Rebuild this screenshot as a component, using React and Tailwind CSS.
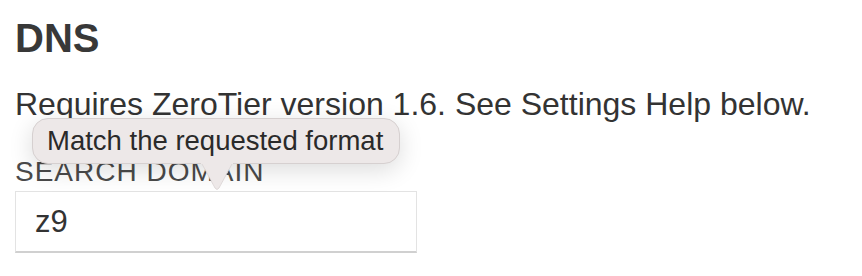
export default function App() {
  return (
    <div className="relative w-[862px] h-[276px] bg-white text-[#333] font-['Liberation_Sans',Arial,sans-serif]">
      <div className="flex flex-col pl-[15px] pt-[18px]">
        {/* Heading */}
        <h2 className="text-[40px] leading-[40px] font-bold text-[#383838]">DNS</h2>
        <p className="mt-[30px] text-[32px] leading-[32px]">
          Requires ZeroTier version 1.6. See Settings Help below.
        </p>
        <label className="mt-[38px] text-[28px] leading-[28px] text-[#4a4a4a] uppercase tracking-[1px]">
          Search Domain
        </label>
        <div className="mt-[5px] w-[402px] h-[62px] border border-[#e3e3e3] border-b-2 border-b-[#d0d0d0] bg-white flex items-center pl-[19px]">
          <span className="text-[31px] leading-[31px] text-[#333]">z9</span>
        </div>
      </div>

      {/* Validation tooltip */}
      <div className="absolute left-[32px] top-[118px] w-[368px] h-[46px] rounded-[16px] bg-[#ede8e8] border border-[#d6d0d0] shadow-[0_6px_24px_rgba(0,0,0,0.14)] flex items-center pl-[14px]">
        <span className="text-[27.5px] leading-[28px] text-[#2a2a2a]">Match the requested format</span>
      </div>
      <svg className="absolute left-[201px] top-[162px]" width="32" height="30" viewBox="0 0 32 30">
        <path d="M0 0 L14 26 Q16 29 18 26 L32 0 Z" fill="#ede8e8" />
        <path d="M0.5 1 L14 26 Q16 29 18 26 L31.5 1" fill="none" stroke="#d9d3d3" strokeWidth="0.8" />
        <rect x="0" y="0" width="32" height="2" fill="#ede8e8" />
      </svg>
    </div>
  );
}
